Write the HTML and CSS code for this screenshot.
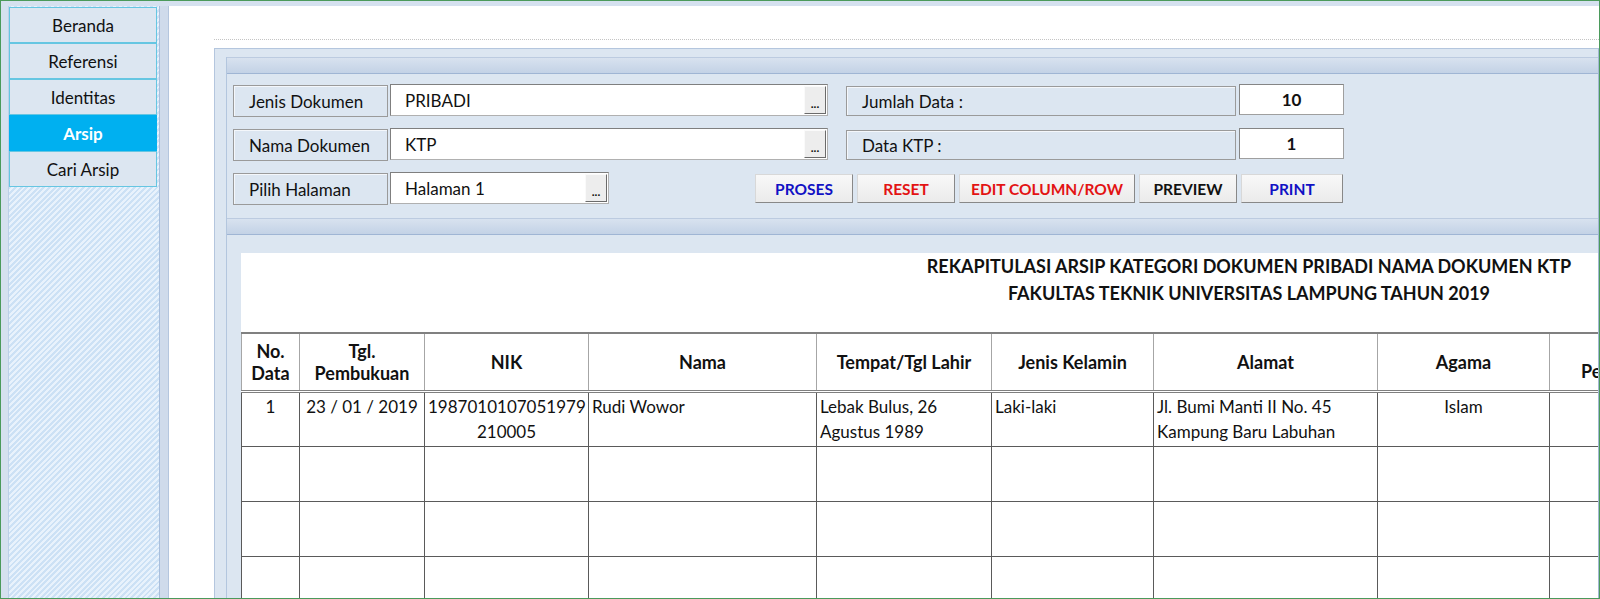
FILE: index.html
```html
<!DOCTYPE html>
<html lang="id">
<head>
<meta charset="utf-8">
<title>Arsip</title>
<link rel="stylesheet" href="styles.css">
</head>
<body>
<div class="frame">
  <nav class="sidebar">
    <div class="nav-item">Beranda</div>
    <div class="nav-item">Referensi</div>
    <div class="nav-item">Identitas</div>
    <div class="nav-item active">Arsip</div>
    <div class="nav-item">Cari Arsip</div>
  </nav>
  <div class="strip"></div>
  <main class="main">
    <div class="dots"></div>
    <div class="panel">
      <div class="section">
        <div class="band"></div>
        <div class="form">
          <div class="row">
            <div class="lbl">Jenis Dokumen</div>
            <div class="field wide"><span class="val">PRIBADI</span><span class="pick">...</span></div>
            <div class="info">Jumlah Data :</div>
            <div class="num">10</div>
          </div>
          <div class="row">
            <div class="lbl">Nama Dokumen</div>
            <div class="field wide"><span class="val">KTP</span><span class="pick">...</span></div>
            <div class="info">Data KTP :</div>
            <div class="num">1</div>
          </div>
          <div class="row">
            <div class="lbl">Pilih Halaman</div>
            <div class="field short"><span class="val">Halaman 1</span><span class="pick">...</span></div>
            <div class="buttons">
              <button class="btn blue">PROSES</button>
              <button class="btn red">RESET</button>
              <button class="btn red w-edit">EDIT COLUMN/ROW</button>
              <button class="btn black">PREVIEW</button>
              <button class="btn blue w-print">PRINT</button>
            </div>
          </div>
        </div>
        <div class="band band2"></div>
        <div class="report">
          <div class="page">
            <div class="title">REKAPITULASI ARSIP KATEGORI DOKUMEN PRIBADI NAMA DOKUMEN KTP<br>FAKULTAS TEKNIK UNIVERSITAS LAMPUNG TAHUN 2019</div>
            <table class="rekap">
              <colgroup>
                <col class="c-no"><col class="c-tgl"><col class="c-nik"><col class="c-nama"><col class="c-ttl"><col class="c-jk"><col class="c-alamat"><col class="c-agama"><col class="c-kerja"><col class="c-rest">
              </colgroup>
              <thead>
                <tr>
                  <th>No.<br>Data</th>
                  <th>Tgl.<br>Pembukuan</th>
                  <th>NIK</th>
                  <th>Nama</th>
                  <th>Tempat/Tgl Lahir</th>
                  <th>Jenis Kelamin</th>
                  <th>Alamat</th>
                  <th>Agama</th>
                  <th class="th-low">Pekerjaan</th>
                  <th></th>
                </tr>
              </thead>
              <tbody>
                <tr>
                  <td class="ctr">1</td>
                  <td class="ctr">23 / 01 / 2019</td>
                  <td class="ctr">1987010107051979<br>210005</td>
                  <td>Rudi Wowor</td>
                  <td>Lebak Bulus, 26<br>Agustus 1989</td>
                  <td>Laki-laki</td>
                  <td>Jl. Bumi Manti II No. 45<br>Kampung Baru Labuhan</td>
                  <td class="ctr">Islam</td>
                  <td></td>
                  <td></td>
                </tr>
                <tr><td></td><td></td><td></td><td></td><td></td><td></td><td></td><td></td><td></td><td></td></tr>
                <tr><td></td><td></td><td></td><td></td><td></td><td></td><td></td><td></td><td></td><td></td></tr>
                <tr><td></td><td></td><td></td><td></td><td></td><td></td><td></td><td></td><td></td><td></td></tr>
              </tbody>
            </table>
          </div>
        </div>
      </div>
    </div>
  </main>
</div>
</body>
</html>
```
FILE: styles.css
```css
* { box-sizing: border-box; }
html, body { margin: 0; padding: 0; }
body {
  width: 1600px;
  height: 599px;
  overflow: hidden;
  font-family: Lato, "Open Sans", sans-serif;
  font-size: 17px;
  color: #111;
}
.frame {
  display: flex;
  width: 1600px;
  height: 599px;
  border: 1px solid #4b9a5b;
  background: #d5e1ef;
  padding: 5px 0 0 7px;
  overflow: hidden;
}
/* sidebar */
.sidebar {
  flex: 0 0 152px;
  border-left: 1px solid #bcd0e8;
  border-right: 1px solid #a8bedc;
  padding-top: 1px;
  background: repeating-linear-gradient(135deg, #cce1f5 0 2px, #e8f2fc 2px 4px);
}
.nav-item {
  width: 148px;
  height: 36px;
  display: flex;
  align-items: center;
  justify-content: center;
  background: #dce6f1;
  border: 1px solid #66c6e2;
}
.nav-item.active {
  background: #00b0f0;
  border-color: #00b0f0;
  color: #fff;
  font-weight: 700;
}
.strip {
  flex: 0 0 9px;
  background: #cfdbeb;
  border-right: 1px solid #b4c6de;
}
/* main */
.main {
  flex: 1;
  min-width: 0;
  display: flex;
  flex-direction: column;
  background: #fff;
  padding: 33px 0 0 45px;
}
.dots {
  border-top: 1px dotted #c4c4c4;
  margin-bottom: 8px;
}
.panel {
  flex: 1;
  display: flex;
  flex-direction: column;
  border-top: 1px solid #b4c6de;
  border-left: 1px solid #b4c6de;
  border-right: 1px solid #a3b7d3;
  background: #dce6f1;
  padding: 8px 0 0 11px;
  min-height: 0;
}
.section {
  flex: 1;
  display: flex;
  flex-direction: column;
  border-left: 1px solid #b3c6de;
  overflow: hidden;
  min-height: 0;
}
.band {
  flex: 0 0 17px;
  border-top: 1px solid #bccbe0;
  border-bottom: 1px solid #9fb5d4;
  background: linear-gradient(#d8e2ef, #c3d2e6);
}
/* form */
.form {
  flex: 0 0 144px;
  padding: 10px 0 0 6px;
}
.row {
  display: flex;
  align-items: flex-start;
  height: 32px;
  margin-bottom: 12px;
}
.lbl {
  width: 155px;
  height: 32px;
  margin-top: 1px;
  display: flex;
  align-items: center;
  padding-left: 15px;
  background: #dce6f1;
  border: 1px solid #9a9a9a;
  box-shadow: inset 1px 1px 0 #f4f7fb;
}
.field {
  height: 32px;
  margin-left: 2px;
  display: flex;
  align-items: center;
  padding-left: 14px;
  background: #fff;
  border: 1px solid #b0b0b0;
  border-top-color: #7f7f7f;
  border-left-color: #7f7f7f;
}
.field.wide { width: 438px; }
.field.short { width: 219px; }
.val { flex: 1; }
.pick {
  align-self: stretch;
  width: 22px;
  margin: 1px 1px 1px 0;
  display: flex;
  align-items: flex-end;
  justify-content: center;
  padding-bottom: 3px;
  font-size: 12px;
  font-weight: 700;
  line-height: 1;
  background: #ededed;
  border: 1px solid;
  border-color: #fafafa #6b6b6b #6b6b6b #fafafa;
}
.info {
  width: 390px;
  height: 30px;
  margin: 2px 0 0 18px;
  display: flex;
  align-items: center;
  padding-left: 15px;
  background: #dce6f1;
  border: 1px solid #9a9a9a;
  box-shadow: inset 1px 1px 0 #f4f7fb;
}
.num {
  width: 105px;
  height: 31px;
  margin-left: 3px;
  display: flex;
  align-items: center;
  justify-content: center;
  font-weight: 700;
  background: #fff;
  border: 1px solid #9f9f9f;
  border-top-color: #858585;
  border-left-color: #858585;
}
.buttons {
  display: flex;
  gap: 4px;
  margin: 2px 0 0 146px;
}
.btn {
  width: 98px;
  height: 29px;
  padding: 0;
  font-family: Lato, "Open Sans", sans-serif;
  font-size: 15.5px;
  font-weight: 700;
  background: linear-gradient(#f8f8f8, #ebebeb);
  border: 1px solid;
  border-color: #d8d8d8 #888 #888 #d8d8d8;
}
.btn.w-edit { width: 176px; }
.btn.w-print { width: 102px; }
.btn.blue { color: #1111c4; }
.btn.red { color: #e31313; }
.btn.black { color: #111; }
/* report */
.report {
  flex: 1;
  padding: 18px 0 0 14px;
  overflow: hidden;
}
.page {
  width: 2016px;
  height: 400px;
  background: #fff;
}
.title {
  text-align: center;
  font-size: 18px;
  font-weight: 700;
  line-height: 27px;
}
.rekap {
  margin-top: 25px;
  border-collapse: collapse;
  table-layout: fixed;
  width: 2016px;
}
.c-no { width: 58px; }
.c-tgl { width: 125px; }
.c-nik { width: 164px; }
.c-nama { width: 228px; }
.c-ttl { width: 175px; }
.c-jk { width: 162px; }
.c-alamat { width: 224px; }
.c-agama { width: 172px; }
.c-kerja { width: 142px; }
.rekap th {
  height: 58px;
  padding: 0 2px;
  font-size: 18px;
  font-weight: 700;
  line-height: 22px;
  text-align: center;
  vertical-align: middle;
  border-top: 2px solid #808080;
  border-bottom: 3px double #7f7f7f;
  border-left: 1px solid #a6a6a6;
  border-right: 1px solid #a6a6a6;
}
.rekap th.th-low {
  vertical-align: bottom;
  padding-bottom: 8px;
}
.rekap td {
  height: 55px;
  padding: 1px 3px 0;
  line-height: 25px;
  vertical-align: top;
  border: 1px solid #5a5a5a;
}
.rekap td.ctr { text-align: center; }
```
